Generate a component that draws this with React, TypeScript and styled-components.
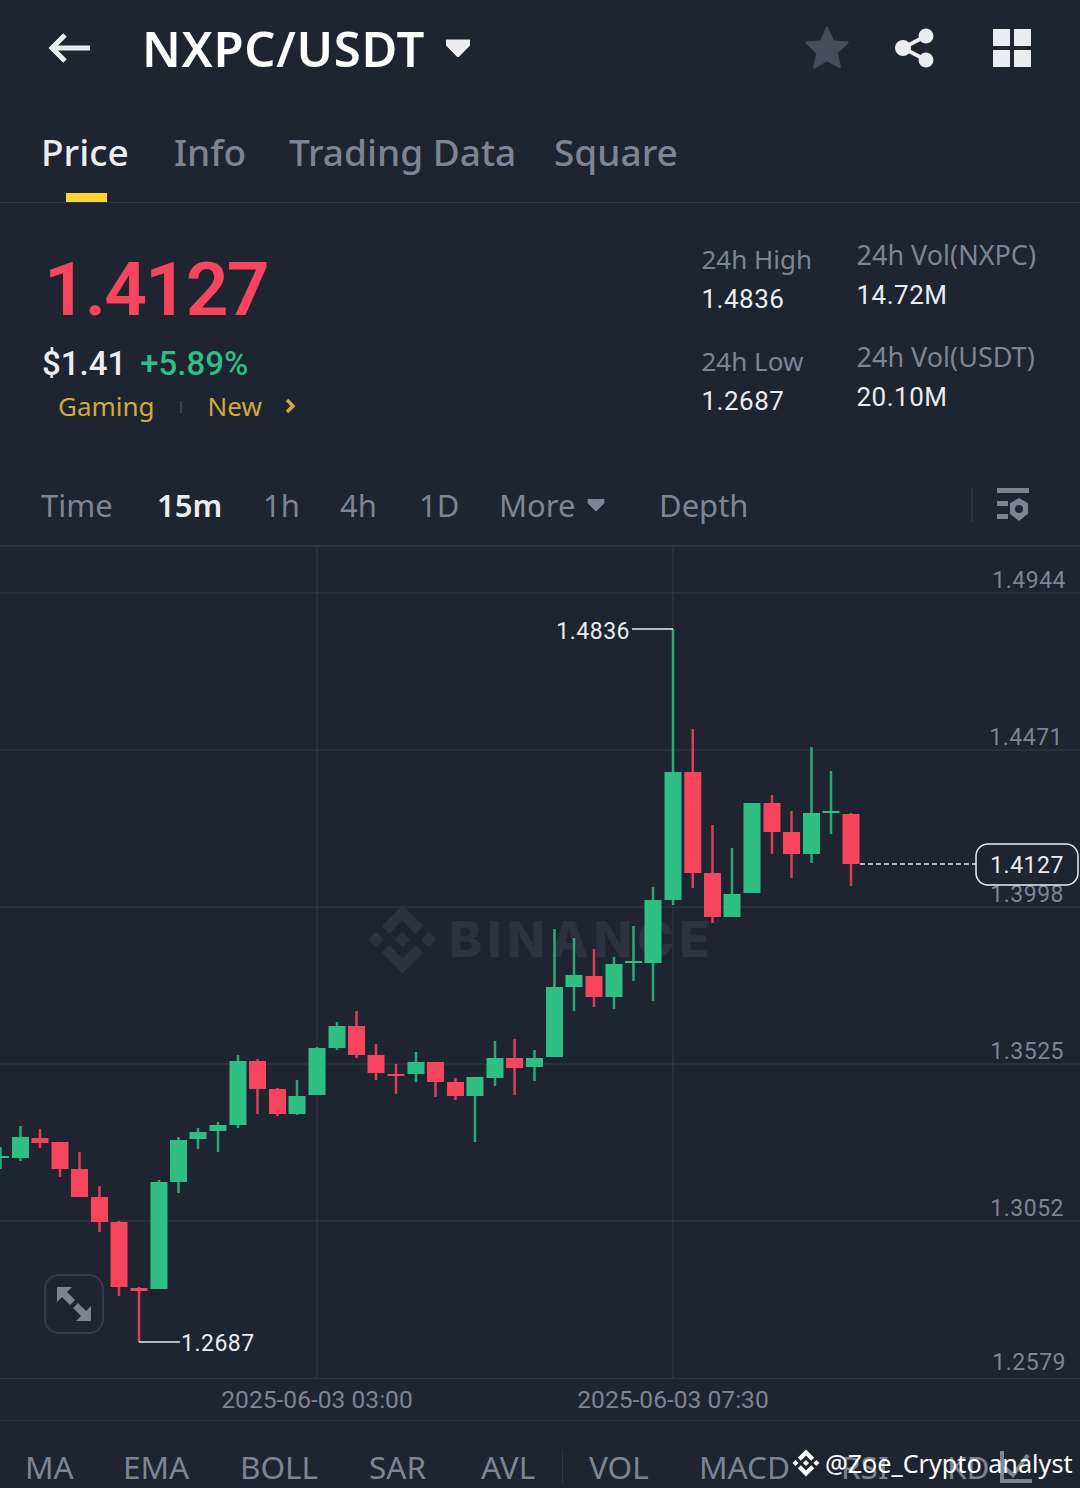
import React from 'react';
import styled, { createGlobalStyle } from 'styled-components';

const BG = '#1e2430';
const LINE = '#2e3440';
const MUTED = '#7d8594';
const UP = '#2fbf84';
const DOWN = '#f8455e';

const GlobalStyle = createGlobalStyle`
  html, body {
    margin: 0;
    padding: 0;
    background: ${BG};
  }
`;

const Page = styled.div`
  position: relative;
  width: 1080px;
  height: 1488px;
  overflow: hidden;
  background: ${BG};
  font-family: 'Noto Sans', sans-serif;
  color: ${MUTED};
`;

const Header = styled.header`
  display: flex;
  align-items: center;
  height: 96px;
  padding: 0 49px 0 48px;
`;

const Title = styled.h1`
  margin: 0 20px 0 52px;
  font-size: 49px;
  font-weight: 600;
  line-height: 1;
  color: #fff;
  letter-spacing: 0.7px;
`;

const HeaderIcons = styled.div`
  display: flex;
  align-items: center;
  gap: 45px;
  margin-left: auto;
`;

const AppsIcon = styled.svg`
  margin-left: 12px;
`;

const Tabs = styled.nav`
  display: grid;
  grid-template-columns: 133px 115px 265px auto;
  align-items: start;
  height: 107px;
  padding: 28px 0 0 41px;
  box-sizing: border-box;
  border-bottom: 1px solid ${LINE};
`;

const Tab = styled.div<{ $active?: boolean }>`
  position: relative;
  font-size: 37px;
  line-height: 56px;
  font-weight: 500;
  color: ${(p) => (p.$active ? '#eaecef' : MUTED)};

  &::after {
    content: '';
    display: ${(p) => (p.$active ? 'block' : 'none')};
    position: absolute;
    left: 25px;
    top: 69px;
    width: 41px;
    height: 9px;
    background: #fcd535;
  }
`;

const Stats = styled.section`
  display: flex;
  justify-content: space-between;
  height: 267px;
  padding: 0 44px 0 42px;
  box-sizing: border-box;
`;

const Quote = styled.div`
  padding-top: 46px;
`;

const LastPrice = styled.div`
  font-family: Roboto, sans-serif;
  font-size: 75px;
  font-weight: 600;
  line-height: 80px;
  color: ${DOWN};
  margin-left: 2px;
  letter-spacing: -2px;
`;

const PriceLine = styled.div`
  display: flex;
  align-items: baseline;
  gap: 14px;
  margin-top: 15px;
  font-family: Roboto, sans-serif;
  font-weight: 500;
  font-size: 33px;
  line-height: 40px;
`;

const Fiat = styled.span`
  color: #eaecef;
`;

const Change = styled.span`
  color: ${UP};
`;

const TagRow = styled.div`
  display: flex;
  align-items: center;
  margin: 3px 0 0 16px;
  font-size: 26px;
  line-height: 38px;
  color: #d0ab3e;
`;

const TagDivider = styled.i`
  width: 2px;
  height: 12px;
  margin: 2px 26px 0 25px;
  background: #3c4350;
`;

const TagChevron = styled.svg`
  margin-left: 23px;
`;

const Market = styled.div`
  display: flex;
  padding-top: 33px;
`;

const MarketColumn = styled.div<{ $shift: number; $labelSize: number; $width?: number }>`
  display: flex;
  flex-direction: column;
  gap: 24px;
  width: ${(p) => (p.$width ? `${p.$width}px` : 'auto')};
  padding-top: ${(p) => p.$shift}px;
  font-size: ${(p) => p.$labelSize}px;
`;

const MarketStat = styled.div`
  display: flex;
  flex-direction: column;
  gap: 2px;
`;

const StatLabel = styled.span`
  line-height: 38px;
  color: ${MUTED};
`;

const StatValue = styled.span`
  font-family: Roboto, sans-serif;
  font-size: 26px;
  line-height: 38px;
  color: #eaecef;
  letter-spacing: 0.5px;
`;

const Toolbar = styled.div`
  display: grid;
  grid-template-columns: 116px 106px 77px 79px 80px 160px 312px 26px auto;
  align-items: center;
  height: 77px;
  padding: 0 0 5px 41px;
  box-sizing: border-box;
  border-bottom: 2px solid ${LINE};
`;

const ToolItem = styled.div<{ $active?: boolean }>`
  display: flex;
  align-items: center;
  gap: 11px;
  font-size: 31px;
  line-height: 40px;
  font-weight: ${(p) => (p.$active ? 600 : 400)};
  color: ${(p) => (p.$active ? '#eaecef' : MUTED)};
`;

const ToolDivider = styled.i`
  width: 2px;
  height: 34px;
  background: ${LINE};
`;

const ChartArea = styled.div`
  position: relative;
  height: 831px;

  svg.chart {
    display: block;
  }
`;

const ExpandButton = styled.button`
  position: absolute;
  left: 44px;
  top: 727px;
  display: flex;
  align-items: center;
  justify-content: center;
  width: 60px;
  height: 60px;
  padding: 0;
  border: 2px solid #343a47;
  border-radius: 15px;
  background: transparent;
`;

const TimeAxis = styled.div`
  display: grid;
  grid-template-columns: 192px 192px;
  column-gap: 164px;
  height: 43px;
  padding-left: 221px;
  box-sizing: border-box;
  border-top: 1px solid ${LINE};
  border-bottom: 1px solid ${LINE};
`;

const TimeLabel = styled.span`
  font-family: Roboto, sans-serif;
  font-size: 24.6px;
  line-height: 42px;
  text-align: center;
  white-space: nowrap;
  color: ${MUTED};
`;

const Indicators = styled.div`
  display: grid;
  grid-template-columns: 98px 117px 129px 112px 81px 27px 110px 142px 106px 53px auto;
  align-items: center;
  height: 67px;
  padding: 25px 0 0 25px;
  box-sizing: border-box;
`;

const Indicator = styled.span`
  font-size: 31.5px;
  line-height: 40px;
  color: ${MUTED};
`;

const IndicatorDivider = styled.i`
  width: 1px;
  height: 34px;
  background: ${LINE};
`;

const Credit = styled.div`
  position: absolute;
  left: 792px;
  top: 1444px;
  display: flex;
  align-items: center;
  gap: 5px;
  font-size: 25.2px;
  line-height: 38px;
  color: #fff;
  white-space: nowrap;
`;

type Candle = [number, number, number, number, number, 'g' | 'r'];

// x, high, body top, body bottom, low (page pixels)
const CANDLES: Candle[] = [
  [0.5, 1147, 1156, 1158, 1169, 'g'],
  [20.5, 1126, 1137, 1158, 1161, 'g'],
  [40, 1129, 1138, 1143, 1148, 'r'],
  [60, 1142, 1142, 1169, 1177, 'r'],
  [79.5, 1152, 1169, 1197, 1197, 'r'],
  [99.5, 1186, 1197, 1222, 1232, 'r'],
  [119, 1221, 1222, 1287, 1296, 'r'],
  [139, 1287, 1288, 1291, 1342, 'r'],
  [159, 1180, 1182, 1289, 1289, 'g'],
  [178.5, 1137, 1140, 1182, 1193, 'g'],
  [198, 1128, 1132, 1139, 1149, 'g'],
  [218, 1122, 1125, 1131, 1152, 'g'],
  [238, 1055, 1061, 1125, 1128, 'g'],
  [257.5, 1059, 1061, 1089, 1114, 'r'],
  [277.5, 1088, 1089, 1114, 1116, 'r'],
  [297, 1080, 1096, 1114, 1115, 'g'],
  [317, 1047, 1048, 1095, 1095, 'g'],
  [337, 1022, 1026, 1048, 1050, 'g'],
  [356.5, 1011, 1026, 1055, 1058, 'r'],
  [376, 1044, 1055, 1073, 1080, 'r'],
  [396, 1064, 1074, 1076, 1094, 'r'],
  [416, 1052, 1062, 1074, 1082, 'g'],
  [435.5, 1062, 1062, 1082, 1097, 'r'],
  [455.5, 1078, 1082, 1096, 1100, 'r'],
  [475, 1077, 1077, 1096, 1142, 'g'],
  [495, 1041, 1058, 1078, 1086, 'g'],
  [514.6, 1039, 1058, 1068, 1095, 'r'],
  [534.5, 1050, 1058, 1067, 1081, 'g'],
  [554.5, 929, 987, 1057, 1057, 'g'],
  [574, 938, 975, 987, 1011, 'g'],
  [594, 949, 976, 997, 1007, 'r'],
  [614, 957, 964, 997, 1009, 'g'],
  [633.5, 926, 961, 963, 981, 'g'],
  [653, 887, 900, 963, 1001, 'g'],
  [673, 629, 772, 900, 905, 'g'],
  [692.8, 729, 772, 873, 888, 'r'],
  [712.5, 825, 873, 917, 923, 'r'],
  [732, 848, 894, 917, 917, 'g'],
  [752, 803, 803, 893, 893, 'g'],
  [772, 795, 803, 832, 854, 'r'],
  [791.5, 811, 832, 854, 878, 'r'],
  [811.5, 747, 813, 854, 863, 'g'],
  [831, 771, 811, 813, 834, 'g'],
  [851, 813, 814, 864, 886, 'r'],
];

const GRID_Y = [593, 750, 907, 1064, 1221];
const GRID_X = [317, 673];
const AXIS: [string, number, number][] = [
  ['1.4944', 1066, 588],
  ['1.4471', 1063, 745],
  ['1.3998', 1064, 902],
  ['1.3525', 1064, 1059],
  ['1.3052', 1064, 1216],
  ['1.2579', 1066, 1370],
];

const BINANCE_PATH =
  'M7.55 10.08L12 5.63l4.45 4.45 2.59-2.59L12 .45 4.96 7.49l2.59 2.59zM.45 12l2.59-2.59L5.63 12l-2.59 2.59L.45 12zM7.55 13.92L12 18.37l4.45-4.45 2.59 2.59L12 23.55l-7.04-7.04 2.59-2.59zM18.37 12l2.59-2.59L23.55 12l-2.59 2.59L18.37 12zM14.63 12L12 9.37 9.37 12 12 14.63 14.63 12z';

const Caret = ({ w, h, color }: { w: number; h: number; color: string }) => (
  <svg width={w} height={h} viewBox="0 0 26 20">
    <path d="M1 1.5h24v6L14.3 18.4a1.8 1.8 0 0 1-2.6 0L1 7.5z" fill={color} />
  </svg>
);

const Chart = () => (
  <svg className="chart" width={1080} height={831} viewBox="0 547 1080 831">
    {GRID_Y.map((y) => (
      <line key={y} x1={0} x2={1080} y1={y} y2={y} stroke={LINE} strokeWidth={1.5} />
    ))}
    {GRID_X.map((x) => (
      <line key={x} x1={x} x2={x} y1={546} y2={1378} stroke={LINE} strokeWidth={1.5} />
    ))}

    <g fill="#2c323e">
      <path d={BINANCE_PATH} transform="translate(367 904) scale(2.95)" />
      <text x={449} y={957} fontFamily="Inter, sans-serif" fontSize={50} fontWeight={800} letterSpacing={5.1}>
        BINANCE
      </text>
    </g>

    {CANDLES.map(([x, high, top, bottom, low, side]) => {
      const color = side === 'g' ? UP : DOWN;
      return (
        <g key={x} fill={color}>
          <rect x={x - 1.25} y={high} width={2.5} height={low - high} opacity={0.85} />
          <rect x={x - 8.5} y={top} width={17} height={bottom - top} />
        </g>
      );
    })}

    <g fontFamily="Roboto, sans-serif" fontSize={23} fill={MUTED} textAnchor="end" letterSpacing={0.5}>
      {AXIS.map(([label, x, y]) => (
        <text key={label} x={x} y={y}>
          {label}
        </text>
      ))}
    </g>

    <g stroke="#eaecef" strokeWidth={1.5} fill="none">
      <path d="M632 629H673" />
      <path d="M139 1342H180" />
      <path d="M860 864H976" strokeDasharray="5 3" />
    </g>
    <g fontFamily="Roboto, sans-serif" fontSize={23} fill="#eaecef" letterSpacing={0.5}>
      <text x={630} y={639} textAnchor="end">
        1.4836
      </text>
      <text x={181} y={1351}>
        1.2687
      </text>
    </g>

    <rect x={976} y={844} width={102} height={41} rx={12} fill={BG} stroke="#eaecef" strokeWidth={1.5} />
    <text x={1027} y={873} fontFamily="Roboto, sans-serif" fontSize={23} fill="#eaecef" textAnchor="middle" letterSpacing={0.5}>
      1.4127
    </text>
  </svg>
);

export default function App() {
  return (
    <Page>
      <GlobalStyle />
      <Header>
        <svg width={42} height={32} viewBox="0 0 42 32" fill="none" stroke="#eaecef" strokeWidth={5}>
          <path d="M42 16H4" />
          <path d="M17 3L4 16l13 13" />
        </svg>
        <Title>NXPC/USDT</Title>
        <Caret w={26} h={20} color="#eaecef" />
        <HeaderIcons>
          <svg width={44} height={44} viewBox="0 0 42 42">
            <path
              d="M21 1.5l5.7 13 14 1.4-10.5 9.4 3 13.9L21 32.6l-12.2 7.1 3-13.9L1.3 15.9l14-1.4z"
              fill="#474d5a"
              stroke="#474d5a"
              strokeWidth={2}
              strokeLinejoin="round"
            />
          </svg>
          <svg width={42} height={42} viewBox="0 0 42 42" fill="#eaecef">
            <circle cx={9} cy={21} r={8} />
            <circle cx={32} cy={9} r={7.5} />
            <circle cx={32} cy={33} r={7.5} />
            <path d="M9 21L32 9M9 21l23 12" stroke="#eaecef" strokeWidth={4} />
          </svg>
          <AppsIcon width={38} height={38} viewBox="0 0 38 38" fill="#eaecef">
            <rect width={17} height={17} />
            <rect x={21} width={17} height={17} />
            <rect y={21} width={17} height={17} />
            <rect x={21} y={21} width={17} height={17} />
          </AppsIcon>
        </HeaderIcons>
      </Header>

      <Tabs>
        <Tab $active>Price</Tab>
        <Tab>Info</Tab>
        <Tab>Trading Data</Tab>
        <Tab>Square</Tab>
      </Tabs>

      <Stats>
        <Quote>
          <LastPrice>1.4127</LastPrice>
          <PriceLine>
            <Fiat>$1.41</Fiat>
            <Change>+5.89%</Change>
          </PriceLine>
          <TagRow>
            Gaming
            <TagDivider />
            New
            <TagChevron width={12} height={16} viewBox="0 0 12 16" fill="none" stroke="#d0ab3e" strokeWidth={3.5}>
              <path d="M2 2l6 6-6 6" />
            </TagChevron>
          </TagRow>
        </Quote>
        <Market>
          <MarketColumn $shift={4} $labelSize={26} $width={155}>
            <MarketStat>
              <StatLabel>24h High</StatLabel>
              <StatValue>1.4836</StatValue>
            </MarketStat>
            <MarketStat>
              <StatLabel>24h Low</StatLabel>
              <StatValue>1.2687</StatValue>
            </MarketStat>
          </MarketColumn>
          <MarketColumn $shift={0} $labelSize={27}>
            <MarketStat>
              <StatLabel>24h Vol(NXPC)</StatLabel>
              <StatValue>14.72M</StatValue>
            </MarketStat>
            <MarketStat>
              <StatLabel>24h Vol(USDT)</StatLabel>
              <StatValue>20.10M</StatValue>
            </MarketStat>
          </MarketColumn>
        </Market>
      </Stats>

      <Toolbar>
        <ToolItem>Time</ToolItem>
        <ToolItem $active>15m</ToolItem>
        <ToolItem>1h</ToolItem>
        <ToolItem>4h</ToolItem>
        <ToolItem>1D</ToolItem>
        <ToolItem>
          More
          <Caret w={18} h={14} color={MUTED} />
        </ToolItem>
        <ToolItem>Depth</ToolItem>
        <ToolDivider />
        <svg width={32} height={34} viewBox="0 0 32 34" fill={MUTED}>
          <rect width={32} height={5} />
          <rect y={13} width={11} height={5} />
          <rect y={26} width={11} height={5} />
          <path fillRule="evenodd" d="M22 10l9 5.2v10.6L22 33l-9-7.2V15.2zM22 17a4 4 0 1 0 0 8 4 4 0 0 0 0-8z" />
        </svg>
      </Toolbar>

      <ChartArea>
        <Chart />
        <ExpandButton>
          <svg width={34} height={34} viewBox="0 0 34 34" fill="#7d8390">
            <path d="M0 0h15l-5 5 8 8-5 5-8-8-5 5z" />
            <path d="M34 34H19l5-5-8-8 5-5 8 8 5-5z" />
          </svg>
        </ExpandButton>
      </ChartArea>

      <TimeAxis>
        <TimeLabel>2025-06-03 03:00</TimeLabel>
        <TimeLabel>2025-06-03 07:30</TimeLabel>
      </TimeAxis>

      <Indicators>
        <Indicator>MA</Indicator>
        <Indicator>EMA</Indicator>
        <Indicator>BOLL</Indicator>
        <Indicator>SAR</Indicator>
        <Indicator>AVL</Indicator>
        <IndicatorDivider />
        <Indicator>VOL</Indicator>
        <Indicator>MACD</Indicator>
        <Indicator>RSI</Indicator>
        <Indicator>KD</Indicator>
        <svg width={32} height={32} viewBox="0 0 32 32" fill="none" stroke={MUTED} strokeWidth={4}>
          <path d="M2 0v30h30" />
          <path d="M4 16l9 8 15-20" />
        </svg>
      </Indicators>

      <Credit>
        <svg width={28} height={28} viewBox="0 0 24 24" fill="#fff">
          <path d={BINANCE_PATH} />
        </svg>
        <span>@Zoe_Crypto analyst</span>
      </Credit>
    </Page>
  );
}
